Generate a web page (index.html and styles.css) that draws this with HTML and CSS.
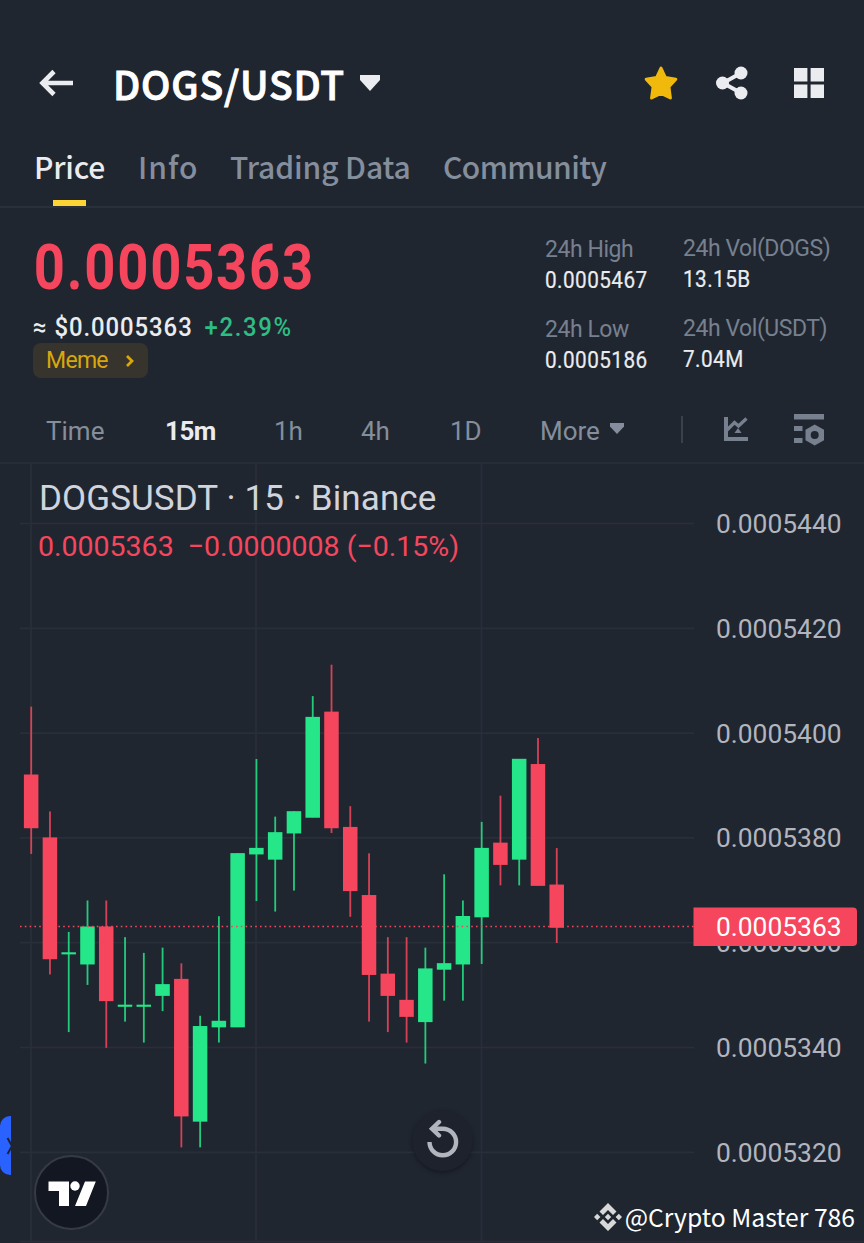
FILE: index.html
```
<!DOCTYPE html>
<html lang="en">
<head>
  <meta charset="UTF-8">
  <meta name="viewport" content="width=device-width, initial-scale=1.0">
  <title>DOGS/USDT</title>
  <link rel="stylesheet" href="styles.css">
</head>
<body>
  <header class="header">
    <svg class="back" width="36" height="30" viewBox="0 0 36 30">
      <path d="M35 15H4.500M16 3.500L4.500 15L16 26.500" fill="none" stroke="#eaecef" stroke-width="4.600"/>
    </svg>
    <h1>DOGS/USDT</h1>
    <svg class="caret" width="22" height="18" viewBox="0 0 22 18"><path d="M1 1H21V6L11 17L1 6Z" fill="#eaecef"/></svg>
    <div class="header-icons">
      <svg width="36" height="36" viewBox="0 0 36 36">
        <path d="M18 3L22.400 12.600L32.800 14.200L25.900 21.800L27.400 33L18 28.400L8.600 33L10.100 21.800L3.200 14.200L13.600 12.600Z" fill="#f0b90b" stroke="#f0b90b" stroke-width="3" stroke-linejoin="round"/>
      </svg>
      <svg width="32" height="34" viewBox="0 0 32 34">
        <path d="M25 7L7 17L25 27" fill="none" stroke="#eaecef" stroke-width="4"/>
        <circle cx="25" cy="7" r="6.500" fill="#eaecef"/>
        <circle cx="6.500" cy="17" r="6.500" fill="#eaecef"/>
        <circle cx="25" cy="27" r="6.500" fill="#eaecef"/>
      </svg>
      <svg width="30" height="30" viewBox="0 0 30 30">
        <path d="M0 0H13.400V13.400H0ZM16.600 0H30V13.400H16.600ZM0 16.600H13.400V30H0ZM16.600 16.600H30V30H16.600Z" fill="#eaecef"/>
      </svg>
    </div>
  </header>

  <nav class="tabs">
    <a class="tab active">Price</a>
    <a class="tab info">Info</a>
    <a class="tab trading">Trading Data</a>
    <a class="tab community">Community</a>
  </nav>

  <section class="ticker">
    <div class="quote">
      <div class="last-price">0.0005363</div>
      <div class="fiat"><span>≈ $0.0005363</span><span class="change">+2.39%</span></div>
      <div class="tag">Meme
        <svg width="10" height="14" viewBox="0 0 10 14"><path d="M2 2L7 7L2 12" fill="none" stroke="#d9a70c" stroke-width="2.800"/></svg>
      </div>
    </div>
    <dl class="stats">
      <dt>24h High</dt><dd>0.0005467</dd>
      <dt class="second">24h Low</dt><dd>0.0005186</dd>
    </dl>
    <dl class="stats volume">
      <dt>24h Vol(DOGS)</dt><dd>13.15B</dd>
      <dt class="second">24h Vol(USDT)</dt><dd>7.04M</dd>
    </dl>
  </section>

  <div class="intervals">
    <span class="interval time">Time</span>
    <span class="interval m15">15m</span>
    <span class="interval h1">1h</span>
    <span class="interval h4">4h</span>
    <span class="interval d1">1D</span>
    <span class="interval more">More</span>
    <svg class="more-caret" width="14" height="11" viewBox="0 0 14 11"><path d="M0 0H14V3.500L7 11L0 3.500Z" fill="#848e9c"/></svg>
    <span class="divider"></span>
    <svg class="draw-icon" width="24" height="26" viewBox="0 0 24 26">
      <path d="M2 1V23H24" fill="none" stroke="#76808f" stroke-width="4"/>
      <path d="M3 14L10.500 6.500L14.500 10L22.500 2.500" fill="none" stroke="#76808f" stroke-width="3.300"/>
      <path d="M14 12L17.500 17H10.500Z" fill="#76808f"/>
    </svg>
    <svg class="settings-icon" width="31" height="32" viewBox="0 0 31 32">
      <path d="M0 0H30V5.500H0ZM0 12H8.500V17H0ZM0 24H8.500V29H0Z" fill="#76808f"/>
      <path d="M20.700 10.500L30 15.700V26.300L20.700 31.500L11.500 26.300V15.700ZM20.700 17A4 4 0 1 0 20.700 25A4 4 0 1 0 20.700 17Z" fill="#76808f" fill-rule="evenodd"/>
    </svg>
  </div>

  <main class="chart">
    <svg id="plot" width="864" height="779" viewBox="0 464 864 779"></svg>
    <div class="legend">
      <div class="legend-title">DOGSUSDT · 15 · Binance</div>
      <div class="legend-values"><span>0.0005363</span><span>−0.0000008 (−0.15%)</span></div>
    </div>
    <div class="drawer-handle">
      <svg width="11" height="18" viewBox="0 0 11 18"><path d="M7.500 1L12 9L7.500 17" fill="none" stroke="#1e222d" stroke-width="2"/></svg>
    </div>
    <div class="tv-logo">
      <svg width="48" height="26" viewBox="0 0 48 26">
        <path d="M0.500 0.500H21V25H11V10H0.500ZM37 0.500H47.800L38 25H27Z" fill="#fff"/>
        <circle cx="27" cy="5" r="4.700" fill="#fff"/>
      </svg>
    </div>
    <div class="reset">
      <svg width="34" height="40" viewBox="0 0 34 40">
        <path d="M3.500 23A13.300 13.300 0 1 0 16.800 9.700H6" fill="none" stroke="#b2b5be" stroke-width="4.400"/>
        <path d="M13 3L6 9.700L13 16.500" fill="none" stroke="#b2b5be" stroke-width="4.400" stroke-linecap="round"/>
      </svg>
    </div>
    <div class="watermark">
      <svg width="28" height="28" viewBox="0 0 28 28">
        <path d="M14 0L22.500 8.500L19 12L14 7L9 12L5.500 8.500ZM14 28L5.500 19.500L9 16L14 21L19 16L22.500 19.500ZM3.200 10.800L6.400 14L3.200 17.200L0 14ZM24.800 10.800L28 14L24.800 17.200L21.600 14ZM14 10.800L17.200 14L14 17.200L10.800 14Z" fill="#d8d8d8"/>
      </svg>
      <span>@Crypto Master 786</span>
    </div>
  </main>

  <script>
    // open, high, low, close in units of 0.0000001
    const candles = [
      [5392, 5405, 5377, 5382], [5380, 5385, 5354, 5357], [5358, 5362, 5343, 5358],
      [5356, 5368, 5352, 5363], [5363, 5368, 5340, 5349], [5348, 5361, 5345, 5348],
      [5348, 5358, 5341, 5348], [5350, 5359, 5347, 5352], [5353, 5356, 5321, 5327],
      [5326, 5346, 5321, 5344], [5344, 5365, 5341, 5345], [5344, 5377, 5344, 5377],
      [5377, 5395, 5368, 5378], [5376, 5384, 5366, 5381], [5381, 5385, 5370, 5385],
      [5384, 5407, 5384, 5403], [5404, 5413, 5381, 5382], [5382, 5386, 5365, 5370],
      [5369, 5377, 5345, 5354], [5354, 5361, 5343, 5350], [5349, 5361, 5341, 5346],
      [5345, 5359, 5337, 5355], [5355, 5373, 5349, 5356], [5356, 5368, 5349, 5365],
      [5365, 5383, 5356, 5378], [5379, 5388, 5371, 5375], [5376, 5395, 5371, 5395],
      [5394, 5399, 5371, 5371], [5371, 5378, 5360, 5363]
    ];
    const y = price => 523.5 + (5440 - price) * 5.24;
    let out = '';

    // grid
    for (const x of [31, 256, 481.5]) {
      out += `<path class="grid" d="M${x} 464V1241"/>`;
    }
    for (let p = 5440; p >= 5320; p -= 20) {
      out += `<path class="grid" d="M20 ${y(p)}H694"/>`;
      out += `<text class="axis" x="716" y="${y(p) + 9.5}">0.000${p}</text>`;
    }
    out += '<path class="grid" d="M20 1241.5H864"/>';

    // candles
    candles.forEach(([open, high, low, close], i) => {
      const x = 31.1 + i * 18.77;
      const doji = open === close ? 0.4 : 0;
      const top = y(Math.max(open, close)) - 0.5 - doji;
      const bottom = y(Math.min(open, close)) + 0.8 + doji;
      const side = close >= open ? 'up' : 'down';
      out += `<rect class="${side} wick" x="${x - 0.8}" y="${y(high) - 0.3}" width="1.8" height="${y(low) - y(high) + 0.6}"/>`;
      out += `<rect class="${side}" x="${x - 7.2}" y="${top}" width="14.5" height="${bottom - top}"/>`;
    });

    // last price
    out += '<path class="last-line" d="M20 926.5H694"/>';
    out += '<path class="last-box" d="M693.500 907.500H853Q857 907.500 857 911.500V942Q857 946 853 946H693.500Z"/>';
    out += '<text class="axis last-label" x="716" y="936">0.0005363</text>';
    document.getElementById('plot').innerHTML = out;
  </script>
</body>
</html>
```
FILE: styles.css
```
* {
  box-sizing: border-box;
}
body {
  margin: 0;
  width: 864px;
  height: 1243px;
  overflow: hidden;
  background-color: #202630;
  color: #eaecef;
  font-family: Roboto, sans-serif;
}
svg {
  display: block;
  flex: none;
}
.header {
  display: flex;
  align-items: center;
  height: 126px;
  padding: 40px 40px 0 38px;
}
.back {
  margin-right: 39px;
}
h1 {
  width: 227px;
  margin: 0 19px 0 0;
  color: #fff;
  font-family: "Noto Sans CJK SC", sans-serif;
  font-size: 39px;
  font-weight: 500;
  line-height: 48px;
  letter-spacing: 0.8px;
  white-space: nowrap;
  -webkit-text-stroke: 0.9px #fff;
}
.header-icons {
  display: flex;
  align-items: center;
  margin-left: auto;
}
.header-icons svg:nth-child(1) {
  margin-right: 37px;
}
.header-icons svg:nth-child(2) {
  margin-right: 46px;
}
.tabs {
  display: flex;
  height: 82px;
  padding-left: 34px;
  border-bottom: 2px solid #2a303a;
  font-family: "Noto Sans CJK SC", sans-serif;
  font-size: 30px;
  font-weight: 500;
  line-height: 80px;
  color: #848e9c;
  white-space: nowrap;
}
.tab.active {
  width: 104px;
  color: #eaecef;
  background: linear-gradient(#fcd535, #fcd535) 19px 74px / 33px 7px no-repeat;
  letter-spacing: -0.2px;
}
.tab.info {
  width: 92px;
  letter-spacing: 1px;
}
.tab.trading {
  width: 213px;
  letter-spacing: -0.1px;
}
.tab.community {
  letter-spacing: -0.6px;
}
.ticker {
  display: flex;
  height: 190px;
  padding-left: 33px;
}
.quote {
  width: 512px;
  padding-top: 27px;
}
/* narrow tabular look for the figures */
.last-price,
.fiat,
.stats dd {
  transform-origin: left;
}
.last-price {
  padding-left: 1px;
  color: #f6465d;
  font-size: 62.5px;
  font-weight: 700;
  line-height: 66px;
  letter-spacing: 2px;
  transform: scaleX(0.87);
}
.fiat {
  display: flex;
  gap: 13px;
  margin-top: 12px;
  font-size: 26px;
  font-weight: 500;
  line-height: 28px;
  letter-spacing: 1px;
  transform: scaleX(0.92);
}
.change {
  color: #2ebd85;
  letter-spacing: 1.8px;
}
.tag {
  display: flex;
  align-items: center;
  gap: 17px;
  width: 115px;
  height: 35px;
  margin-top: 2px;
  padding-left: 13px;
  border-radius: 8px;
  background-color: #36342c;
  color: #d9a70c;
  font-size: 23px;
  letter-spacing: -0.7px;
}
.stats {
  width: 138px;
  margin: 0;
  padding-top: 27px;
  font-size: 23px;
  line-height: 30px;
  white-space: nowrap;
}
.stats dt {
  color: #76808f;
  letter-spacing: -0.45px;
}
.stats dd {
  margin: 1px 0 0;
  letter-spacing: 0.5px;
  transform: scaleX(0.9);
  -webkit-text-stroke: 0.2px #eaecef;
}
.stats .second {
  margin-top: 19px;
}
.volume {
  padding-top: 26px;
}
.intervals {
  display: flex;
  align-items: center;
  height: 66px;
  padding-left: 46px;
  border-bottom: 2px solid #272d37;
  color: #848e9c;
  font-size: 26px;
}
.interval {
  padding-top: 2px;
}
.time { width: 119px; }
.m15 { width: 109px; color: #eaecef; font-weight: 700; letter-spacing: -0.5px; }
.h1 { width: 87px; }
.h4 { width: 89px; }
.d1 { width: 90px; }
.more { width: 70px; }
.more-caret {
  margin-bottom: 4px;
}
.divider {
  width: 2px;
  height: 27px;
  margin: 0 41px 2px 57px;
  background-color: #3a414c;
}
.draw-icon {
  margin-bottom: 2px;
}
.settings-icon {
  margin-left: 46px;
}
.chart {
  position: relative;
  height: 779px;
}
.grid {
  fill: none;
  stroke: #292f39;
  stroke-width: 1.7;
}
.axis {
  fill: #b2b5be;
  font-family: Roboto, sans-serif;
  font-size: 26.4px;
}
.up {
  fill: #25e78a;
}
.down {
  fill: #f6465d;
}
.wick {
  opacity: 0.85;
}
.last-line {
  stroke: #f6465d;
  stroke-width: 1.6;
  stroke-dasharray: 1.6 3.2;
}
.last-box {
  fill: #f6465d;
}
.last-label {
  fill: #fff;
}
.legend {
  position: absolute;
  left: 38px;
  top: 14px;
}
.legend-title {
  padding-left: 1px;
  color: #d1d4dc;
  font-size: 35px;
  line-height: 42px;
  letter-spacing: 0.1px;
}
.legend-values {
  display: flex;
  gap: 14px;
  margin-top: 11px;
  color: #f6465d;
  font-size: 28.5px;
  line-height: 32px;
}
.drawer-handle {
  position: absolute;
  left: 0;
  top: 652px;
  display: flex;
  align-items: center;
  width: 11px;
  height: 59px;
  border-radius: 10px 0 0 10px;
  background-color: #2962ff;
}
.tv-logo {
  position: absolute;
  left: 34px;
  top: 691px;
  display: flex;
  align-items: center;
  justify-content: center;
  width: 75px;
  height: 75px;
  padding-top: 2px;
  border: 2px solid #363a45;
  border-radius: 50%;
  background-color: #131722;
}
.reset {
  position: absolute;
  left: 412px;
  top: 646px;
  display: flex;
  justify-content: center;
  width: 61px;
  height: 61px;
  padding-top: 9px;
  border-radius: 50%;
  background-color: #1e222d;
  box-shadow: 0 2px 4px rgba(0, 0, 0, 0.35);
}
.watermark {
  position: absolute;
  right: 9px;
  top: 736px;
  display: flex;
  align-items: center;
  gap: 3px;
  color: #fff;
  font-family: "Noto Sans CJK SC", sans-serif;
  font-size: 24.7px;
  line-height: 36px;
  white-space: nowrap;
}
.watermark span {
  margin-top: -2px;
}
```
